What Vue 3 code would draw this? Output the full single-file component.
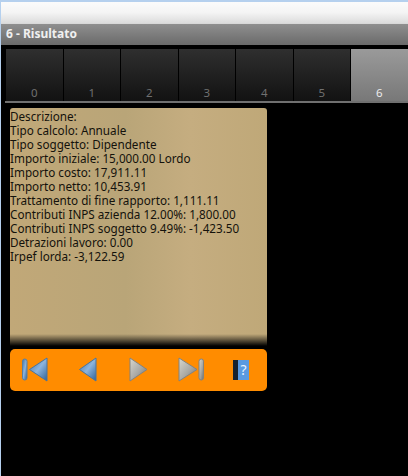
<script setup>
const tabs = ['0', '1', '2', '3', '4', '5', '6']
const lines = [
  'Descrizione:',
  'Tipo calcolo: Annuale',
  'Tipo soggetto: Dipendente',
  'Importo iniziale: 15,000.00 Lordo',
  'Importo costo: 17,911.11',
  'Importo netto: 10,453.91',
  'Trattamento di fine rapporto: 1,111.11',
  'Contributi INPS azienda 12.00%: 1,800.00',
  'Contributi INPS soggetto 9.49%: -1,423.50',
  'Detrazioni lavoro: 0.00',
  'Irpef lorda: -3,122.59'
]
</script>

<template>
  <div class="screen">
    <div class="status"></div>
    <div class="title">6 - Risultato</div>
    <div class="tabs">
      <div v-for="t in tabs" :key="t" class="tab" :class="{ active: t === '6' }"><span>{{ t }}</span></div>
    </div>
    <div class="rule"></div>
    <div class="content">
      <div class="card">
        <div v-for="l in lines" :key="l" class="line">{{ l }}</div>
      </div>
      <div class="toolbar">
        <svg width="30" height="28" viewBox="0 0 30 28">
          <defs>
            <linearGradient id="blue" x1="0" y1="0" x2="1" y2="1">
              <stop offset="0" stop-color="#3f74a8" />
              <stop offset="0.5" stop-color="#8db4dc" />
              <stop offset="1" stop-color="#2f6296" />
            </linearGradient>
            <linearGradient id="grey" x1="0" y1="0" x2="1" y2="1">
              <stop offset="0" stop-color="#d8d8d0" />
              <stop offset="0.55" stop-color="#a8a8a4" />
              <stop offset="1" stop-color="#70706c" />
            </linearGradient>
          </defs>
          <rect x="2.500" y="3" width="4.500" height="21" rx="2.200" fill="url(#blue)" stroke="#5d7f9f" />
          <path d="M27 2 V25 L9.500 13.500 Z" fill="url(#blue)" stroke="#4a759f" stroke-linejoin="round" />
        </svg>
        <svg width="22" height="28" viewBox="0 0 22 28">
          <path d="M19 2 V25 L2.500 13.500 Z" fill="url(#blue)" stroke="#4a759f" stroke-linejoin="round" />
        </svg>
        <svg width="22" height="28" viewBox="0 0 22 28">
          <path d="M3 2 V25 L20 13.500 Z" fill="url(#grey)" stroke="#83837f" stroke-linejoin="round" />
        </svg>
        <svg width="30" height="28" viewBox="0 0 30 28">
          <path d="M3 2 V25 L21 13.500 Z" fill="url(#grey)" stroke="#83837f" stroke-linejoin="round" />
          <rect x="23" y="3" width="4.500" height="21" rx="2.200" fill="url(#grey)" stroke="#83837f" />
        </svg>
        <div class="help"><span>?</span></div>
      </div>
    </div>
  </div>
</template>

<style>
html, body { margin: 0; background: #000; }
</style>

<style scoped>
.screen {
  width: 408px;
  height: 476px;
  box-sizing: border-box;
  background: #000;
  border-left: 1px solid #b5d0ee;
  font-family: "Noto Sans", "Open Sans", sans-serif;
  overflow: hidden;
}
.status {
  height: 21px;
  margin-left: -1px;
  border-top: 2px solid #b5d0ee;
  background: linear-gradient(#fbfbfb 0%, #f4f4f4 50%, #dcdcdc 100%);
}
.title {
  height: 21px;
  padding-left: 5px;
  border-top: 1px solid #d8d8d8;
  background: linear-gradient(#8f8f8f, #6a6a6a);
  color: #f0f0f0;
  font-size: 12px;
  font-weight: 700;
  line-height: 20px;
}
.tabs {
  display: flex;
  gap: 1px;
  height: 52px;
  margin-top: 4px;
  padding-left: 5px;
}
.tab {
  width: 56.500px;
  display: flex;
  align-items: flex-end;
  justify-content: center;
  background: linear-gradient(#2f2f2f, #121212);
  color: #707070;
  font-size: 11.500px;
  line-height: 17px;
}
.tab.active {
  background: linear-gradient(#9a9a9a, #787878);
  color: #ececec;
}
.rule {
  height: 2px;
  margin-left: 4px;
  background: #707070;
}
.content {
  width: 257px;
  margin: 5px 0 0 9px;
}
.card {
  height: 238px;
  box-sizing: border-box;
  padding-top: 1px;
  border-radius: 3px 3px 0 0;
  background:
    linear-gradient(transparent 226px, #000 238px),
    linear-gradient(90deg, #c1a878, #b9a578 45%, #c5ad80 70%, #bfa878);
  color: #14120c;
  font-size: 11.700px;
  line-height: 14px;
  white-space: nowrap;
}
.line { height: 14px; }
.toolbar {
  display: flex;
  align-items: center;
  justify-content: space-between;
  height: 42px;
  box-sizing: border-box;
  margin-top: 3px;
  padding: 0 18px 0 10px;
  border-radius: 5px;
  background: #ff8c00;
}
.help {
  width: 16px;
  height: 20px;
  display: flex;
  justify-content: flex-end;
  background: #17222e;
}
.help span {
  width: 11px;
  background: #5a9ae0;
  color: #e8f2ff;
  font-size: 14px;
  line-height: 20px;
  text-align: center;
}
</style>
